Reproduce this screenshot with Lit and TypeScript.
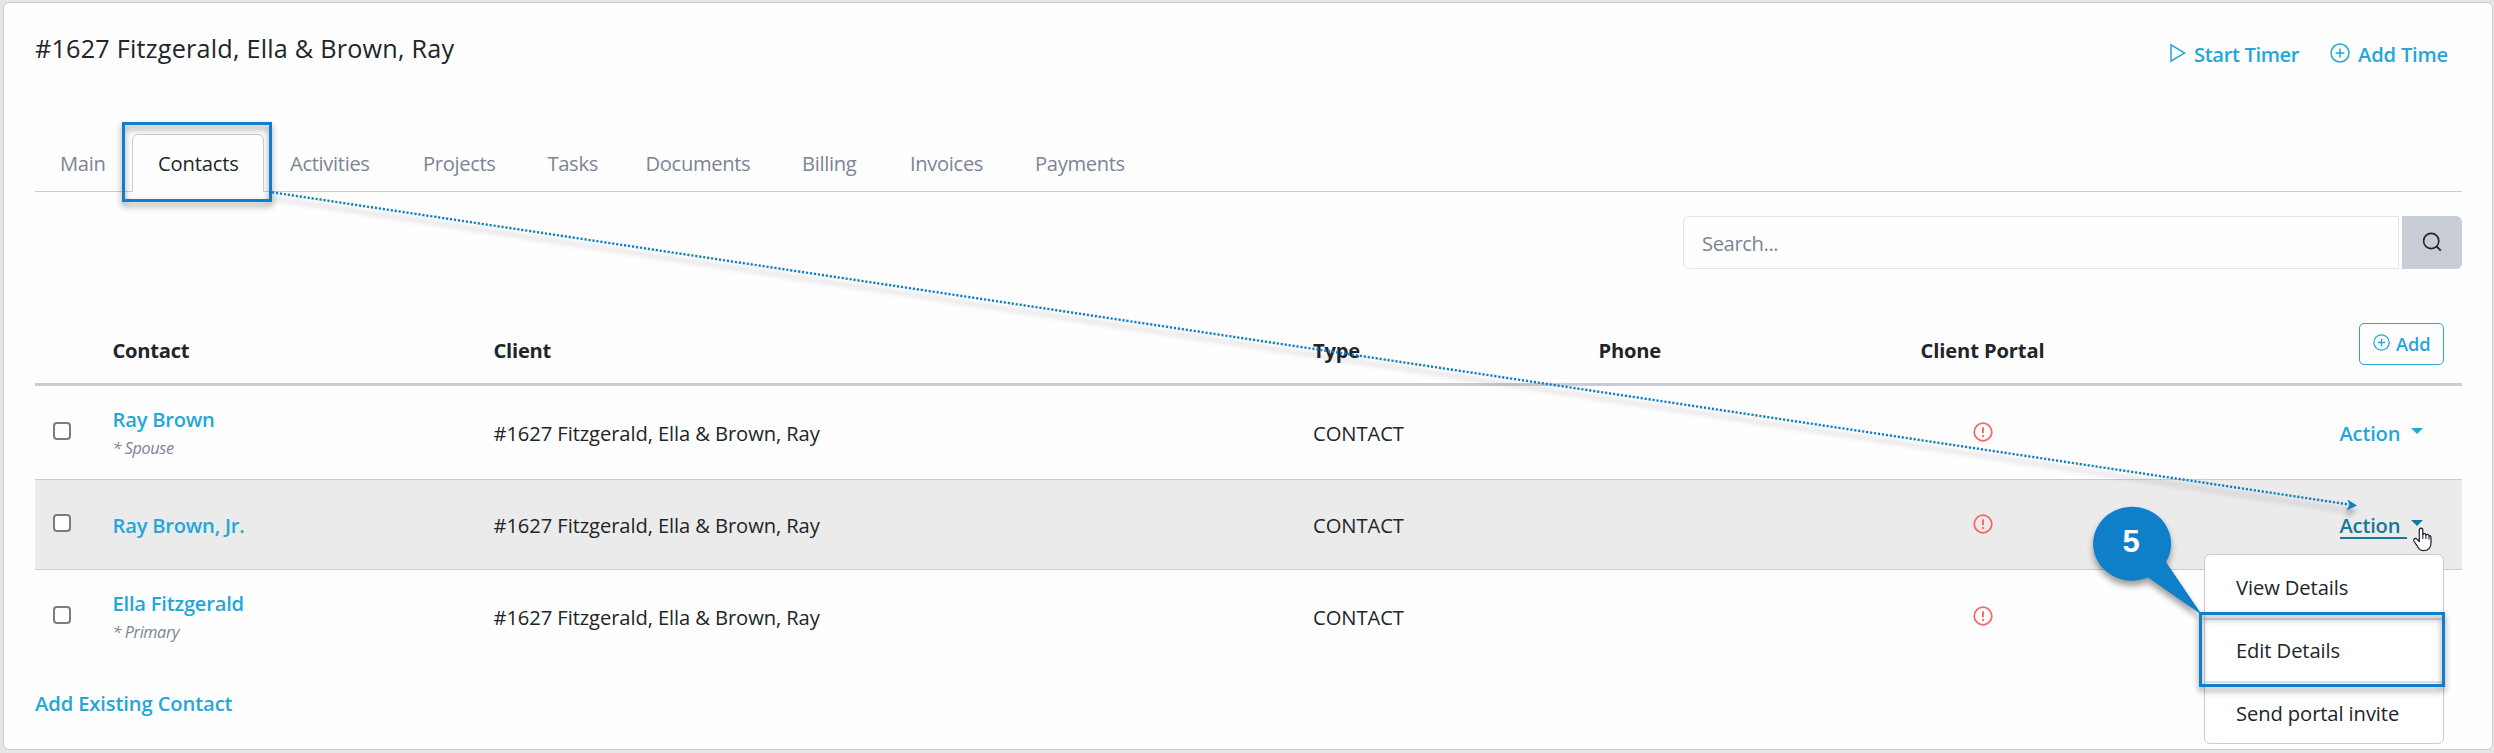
import { LitElement, html, css, svg, nothing } from "lit";
import { customElement } from "lit/decorators.js";
import { classMap } from "lit/directives/class-map.js";

interface Contact {
  name: string;
  role?: string;
  active?: boolean;
}

const TABS = [
  { label: "Main", width: 97 },
  { label: "Contacts", width: 132 },
  { label: "Activities", width: 133 },
  { label: "Projects", width: 124.5 },
  { label: "Tasks", width: 98 },
  { label: "Documents", width: 156.5 },
  { label: "Billing", width: 108 },
  { label: "Invoices", width: 125 },
  { label: "Payments", width: 142 },
];

const CONTACTS: Contact[] = [
  { name: "Ray Brown", role: "* Spouse" },
  { name: "Ray Brown, Jr.", active: true },
  { name: "Ella Fitzgerald", role: "* Primary" },
];

const CLIENT = "#1627 Fitzgerald, Ella & Brown, Ray";

const plusCircle = (size: number) => svg`
  <svg width=${size} height=${size} viewBox="0 0 20 20" fill="none" stroke="currentColor" stroke-width="1.5">
    <circle cx="10" cy="10" r="9" />
    <path d="M10 5.6V14.4M5.6 10H14.4" />
  </svg>`;

const alertCircle = svg`
  <svg width="20" height="20" viewBox="0 0 20 20" fill="none" stroke="#f96868" stroke-width="1.8">
    <circle cx="10" cy="10" r="8.8" />
    <path d="M10 5.3V11.3M10 13V14.9" stroke-width="1.9" />
  </svg>`;

@customElement("app-root")
export class AppRoot extends LitElement {
  static styles = css`
    :host {
      display: block;
      position: relative;
      box-sizing: border-box;
      width: 100%;
      height: 753px;
      padding: 2px 1px 3px 3px;
      overflow: hidden;
      background: #e4e5e7;
      color: #212529;
      font-family: "Open Sans", "Noto Sans", sans-serif;
      font-size: 20.16px;
      line-height: 30px;
      letter-spacing: -0.09px;
    }
    * { box-sizing: border-box; }
    svg { display: block; flex: none; }
    .card {
      height: 748px;
      padding: 0 30px 0 31px;
      border: 1px solid #c8cdd5;
      border-radius: 6px;
      background: #fefefe;
    }
    .link {
      color: #25a6d9;
      font-weight: 600;
      letter-spacing: -0.22px;
    }
    .top {
      display: flex;
      justify-content: space-between;
      height: 131px;
      padding: 27px 14px 0 0;
    }
    .title {
      height: 36px;
      line-height: 36px;
      font-size: 25.2px;
      letter-spacing: 0.22px;
    }
    .tools { display: flex; height: 30px; margin-top: 9px; }
    .tool { display: flex; align-items: center; white-space: nowrap; letter-spacing: -0.38px; }
    .tool + .tool { margin-left: 31px; letter-spacing: -0.2px; }
    .tool svg { margin-right: 8px; position: relative; top: -1px; }
    .tabs { display: flex; height: 58px; border-bottom: 1px solid #c8cdd5; }
    .tab {
      height: 58px;
      padding: 13px 0 0 25px;
      border: 1px solid transparent;
      color: #7b8593;
      letter-spacing: -0.34px;
    }
    .tab:first-child { padding-left: 24px; }
    .tab.on {
      border-color: #c8cdd5;
      border-bottom-color: #fefefe;
      border-radius: 6px 6px 0 0;
      background: #fefefe;
      color: #212529;
      letter-spacing: -0.17px;
    }
    .search { display: flex; justify-content: flex-end; gap: 3px; margin-top: 24px; height: 53px; }
    .field {
      width: 716px;
      padding: 11px 0 0 18px;
      border: 1px solid #e2e5e9;
      border-radius: 6px 0 0 6px;
      color: #7b8593;
      letter-spacing: -0.38px;
    }
    .go {
      display: flex;
      align-items: center;
      justify-content: center;
      width: 60px;
      border-radius: 0 6px 6px 0;
      background: #c8cdd5;
    }
    .go svg { margin: -2px 1px 0 0; }
    .grid {
      display: grid;
      grid-template-columns: 77.5px 381px 819.5px 285.5px 240px 288px 1fr;
      align-items: center;
    }
    .head {
      height: 76px;
      margin-top: 41px;
      padding-top: 6px;
      border-bottom: 3px solid #c8cdd5;
      font-weight: 700;
      letter-spacing: -0.25px;
    }
    .head .portal { letter-spacing: -0.13px; }
    .portal { display: flex; justify-content: center; }
    .add {
      display: flex;
      align-items: center;
      justify-self: end;
      width: 85px;
      height: 42px;
      margin: 0 18px 12px 0;
      padding-left: 13px;
      border: 1px solid #25a6d9;
      border-radius: 5px;
      font-size: 18.2px;
      letter-spacing: -0.1px;
    }
    .add svg { margin: -2px 6px 0 0; }
    .row { height: 92px; padding-top: 2px; border-bottom: 1px solid #c8cdd5; }
    .row.first { height: 94px; padding-top: 0; }
    .row.on { height: 90px; background: #ebebeb; padding-top: 0; }
    .row.last { border-bottom-color: transparent; }
    .check {
      width: 18px;
      height: 18px;
      margin: -3px 0 0 18px;
      border: 2px solid #7c7c7c;
      border-radius: 4px;
      background: #fff;
    }
    .row.on .check { margin-top: -4px; }
    .row:not(.on) .link { margin-top: 1px; }
    .row:not(.on) .action { margin-top: 0; }
    .role {
      color: #7b8593;
      font-size: 16.3px;
      font-style: italic;
      line-height: 28px;
      letter-spacing: -0.42px;
    }
    .row .portal { margin-top: -2px; }
    .kind { letter-spacing: -0.05px; }
    .action { display: flex; align-items: center; padding-left: 213px; }
    .caret {
      margin: -3px 0 0 11px;
      border: 6.5px solid transparent;
      border-top-color: currentColor;
      border-bottom: 0;
    }
    .on .action { color: #15799a; }
    .on .word { box-shadow: 0 2px 0 0 #15799a; width: 67px; height: 24px; line-height: 24px; }
    .on .caret { margin: -4px 0 0 4px; }
    .more { margin-top: 26px; letter-spacing: -0.12px; }
    .menu {
      position: absolute;
      left: 2204px;
      top: 554px;
      width: 240px;
      height: 190px;
      border: 1px solid #c8cdd5;
      border-radius: 6px;
      background: #fff;
    }
    .item { height: 63px; padding: 17px 0 0 31px; line-height: 30px; }
    .item + .item { border-top: 2px solid #dfe2e6; padding-top: 15px; }
    .frame {
      position: absolute;
      border: 3px solid #107fc9;
      filter: drop-shadow(0 4px 3px rgba(0, 0, 0, 0.45));
    }
    .frame-tab { left: 122px; top: 122px; width: 150px; height: 80px; }
    .frame-item { left: 2199px; top: 612px; width: 246px; height: 75px; }
    .ink { position: absolute; left: 0; top: 0; pointer-events: none; }
    .cast { filter: drop-shadow(0 5px 3px rgba(0, 0, 0, 0.38)); }
    .line-cast { filter: drop-shadow(-1px 6px 2.5px rgba(0, 0, 0, 0.32)); }
    .step {
      position: absolute;
      left: 2092px;
      top: 524px;
      width: 78px;
      color: #fff;
      font: 700 31px/36px "Liberation Sans", Arial, sans-serif;
      letter-spacing: 0;
      text-align: center;
    }
  `;

  private row(c: Contact, i: number) {
    const cls = { grid: true, row: true, first: i === 0, on: !!c.active, last: i === CONTACTS.length - 1 };
    return html`
      <div class=${classMap(cls)}>
        <div class="check"></div>
        <div>
          <div class="link">${c.name}</div>
          ${c.role ? html`<div class="role">${c.role}</div>` : nothing}
        </div>
        <div>${CLIENT}</div>
        <div class="kind">CONTACT</div>
        <div></div>
        <div class="portal">${alertCircle}</div>
        <div class="link action"><span class="word">Action</span><i class="caret"></i></div>
      </div>`;
  }

  render() {
    return html`
      <div class="card">
        <div class="top">
          <div class="title">${CLIENT}</div>
          <div class="tools">
            <div class="link tool">
              <svg width="16" height="20" viewBox="0 0 16 20" fill="none" stroke="currentColor" stroke-width="1.5">
                <path d="M1 1.8V18.2L14.6 10Z" />
              </svg>
              Start Timer
            </div>
            <div class="link tool">${plusCircle(20)} Add Time</div>
          </div>
        </div>
        <div class="tabs">
          ${TABS.map((t) => html`
            <div class=${classMap({ tab: true, on: t.label === "Contacts" })} style="width:${t.width}px">${t.label}</div>`)}
        </div>
        <div class="search">
          <div class="field">Search...</div>
          <div class="go">
            <svg width="20" height="20" viewBox="0 0 20 20" fill="none" stroke="#212529" stroke-width="1.6">
              <circle cx="9.2" cy="9" r="7.6" />
              <path d="M14.6 14.4L18.8 18.6" stroke-width="1.9" />
            </svg>
          </div>
        </div>
        <div class="grid head">
          <div></div>
          <div>Contact</div>
          <div>Client</div>
          <div>Type</div>
          <div>Phone</div>
          <div class="portal">Client Portal</div>
          <div class="link add">${plusCircle(17)} Add</div>
        </div>
        ${CONTACTS.map((c, i) => this.row(c, i))}
        <div class="link more">Add Existing Contact</div>
      </div>

      <div class="menu">
        <div class="item">View Details</div>
        <div class="item">Edit Details</div>
        <div class="item">Send portal invite</div>
      </div>

      <div class="frame frame-tab"></div>
      <svg class="ink" width="2494" height="753" viewBox="0 0 2494 753">
        <g class="line-cast">
          <path d="M272 192.3L2349 504.5" stroke="#107fc9" stroke-width="2.4" stroke-dasharray="2.2 1.8" fill="none" />
          <path d="M2357 505.5L2346.5 510.5L2349.5 504.8L2347.5 499.5Z" fill="#107fc9" />
        </g>
        <g class="cast">
          <path
            d="M2149 577.5A39 37 0 1 1 2167 562L2203 615Z"
            transform="translate(-1 0)"
            fill="#107fc9"
          />
        </g>
        <path
          d="M2419.3 541.5V530.2C2419.3 527.3 2422.8 527.3 2422.8 530.2V534.4C2423.3 533.2 2425.6 533.3 2425.9 535C2426.8 533.9 2428.8 534.3 2429 535.9C2430.4 535.1 2431 536.4 2431 538V542.4C2431 547.6 2428.2 550.6 2423.4 550.6C2419.5 550.6 2418.4 548.4 2417 545.6L2413.8 541C2413.2 538.6 2415.6 537.6 2417 539.2Z"
          fill="#fff"
          stroke="#1c1c2e"
          stroke-width="1.2"
          stroke-linejoin="round"
        />
        <path d="M2422.8 534V539M2425.9 535V539M2429 536V539.4" stroke="#1c1c2e" stroke-width="1.1" />
      </svg>
      <div class="frame frame-item"></div>
      <div class="step">5</div>
    `;
  }
}
